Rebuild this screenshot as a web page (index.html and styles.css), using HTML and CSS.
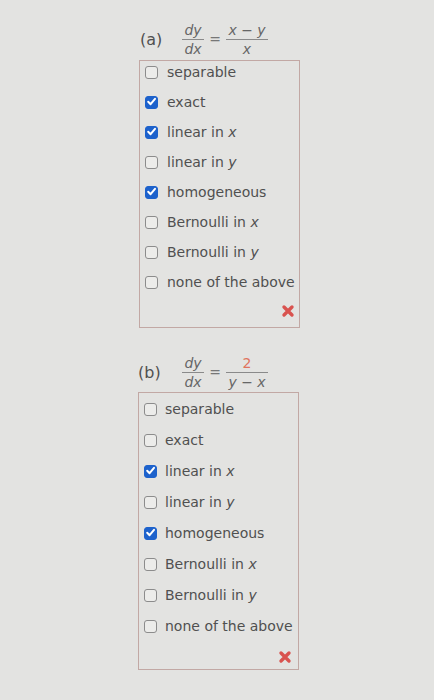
FILE: index.html
```html
<!DOCTYPE html>
<html>
<head>
<meta charset="utf-8">
<link rel="stylesheet" href="styles.css">
</head>
<body>
<div class="page">
  <section class="part part-a">
    <div class="eq">
      <span class="label">(a)</span>
      <span class="frac frac-d"><span class="num">dy</span><span class="den">dx</span></span>
      <span class="eqsign">=</span>
      <span class="frac frac-r"><span class="num">x − y</span><span class="den">x</span></span>
    </div>
    <div class="box">
      <div class="opt"><span class="cb"></span><span class="txt">separable</span></div>
      <div class="opt"><span class="cb on"><svg viewBox="0 0 13 13"><path d="M3.2 6.8 L5.6 9.2 L10 3.8"/></svg></span><span class="txt">exact</span></div>
      <div class="opt"><span class="cb on"><svg viewBox="0 0 13 13"><path d="M3.2 6.8 L5.6 9.2 L10 3.8"/></svg></span><span class="txt">linear in <i>x</i></span></div>
      <div class="opt"><span class="cb"></span><span class="txt">linear in <i>y</i></span></div>
      <div class="opt"><span class="cb on"><svg viewBox="0 0 13 13"><path d="M3.2 6.8 L5.6 9.2 L10 3.8"/></svg></span><span class="txt">homogeneous</span></div>
      <div class="opt"><span class="cb"></span><span class="txt">Bernoulli in <i>x</i></span></div>
      <div class="opt"><span class="cb"></span><span class="txt">Bernoulli in <i>y</i></span></div>
      <div class="opt"><span class="cb"></span><span class="txt">none of the above</span></div>
      <div class="mark"><svg viewBox="0 0 14 14"><path d="M3 3 L11 11 M11 3 L3 11"/></svg></div>
    </div>
  </section>

  <section class="part part-b">
    <div class="eq">
      <span class="label">(b)</span>
      <span class="frac frac-d"><span class="num">dy</span><span class="den">dx</span></span>
      <span class="eqsign">=</span>
      <span class="frac frac-r"><span class="num red">2</span><span class="den">y − x</span></span>
    </div>
    <div class="box">
      <div class="opt"><span class="cb"></span><span class="txt">separable</span></div>
      <div class="opt"><span class="cb"></span><span class="txt">exact</span></div>
      <div class="opt"><span class="cb on"><svg viewBox="0 0 13 13"><path d="M3.2 6.8 L5.6 9.2 L10 3.8"/></svg></span><span class="txt">linear in <i>x</i></span></div>
      <div class="opt"><span class="cb"></span><span class="txt">linear in <i>y</i></span></div>
      <div class="opt"><span class="cb on"><svg viewBox="0 0 13 13"><path d="M3.2 6.8 L5.6 9.2 L10 3.8"/></svg></span><span class="txt">homogeneous</span></div>
      <div class="opt"><span class="cb"></span><span class="txt">Bernoulli in <i>x</i></span></div>
      <div class="opt"><span class="cb"></span><span class="txt">Bernoulli in <i>y</i></span></div>
      <div class="opt"><span class="cb"></span><span class="txt">none of the above</span></div>
      <div class="mark"><svg viewBox="0 0 14 14"><path d="M3 3 L11 11 M11 3 L3 11"/></svg></div>
    </div>
  </section>
</div>
</body>
</html>
```
FILE: styles.css
```css
html, body {
  margin: 0;
  padding: 0;
  background: #e3e3e1;
}
body {
  font-family: "DejaVu Sans", Verdana, sans-serif;
  color: #505050;
  width: 434px;
  height: 700px;
  overflow: hidden;
}
.page {
  display: flex;
  flex-direction: column;
  padding-top: 18px;
}
.part {
  display: flex;
  flex-direction: column;
}
.part-a { margin-left: 139px; }
.part-b { margin-left: 138px; margin-top: 24px; }

.eq {
  display: flex;
  align-items: center;
  height: 42px;
}
.part-b .eq { height: 40px; }
.label {
  font-size: 16px;
  width: 43px;
  padding-left: 1px;
  box-sizing: border-box;
  color: #505050;
}
.part-b .label { width: 44px; padding-left: 0; }
.frac {
  display: inline-flex;
  flex-direction: column;
  align-items: stretch;
  font-size: 14px;
  font-style: italic;
  color: #666;
}
.frac .num, .frac .den {
  display: block;
  text-align: center;
  line-height: 18px;
  height: 18px;
  white-space: nowrap;
}
.frac .num { border-bottom: 1px solid #8a8a8a; }
.frac-d { width: 22px; }
.frac-r { width: 42px; }
.frac .red { color: #e0735e; font-style: normal; }
.eqsign {
  font-size: 14px;
  color: #777;
  width: 22px;
  text-align: center;
}

.box {
  border: 1px solid #c2a8a4;
  width: 161px;
  box-sizing: border-box;
  display: flex;
  flex-direction: column;
  padding: 1px 4px 9px 5px;
  gap: 10px;
}
.part-b .box {
  width: 161px;
  padding: 6px 6px 5px 5px;
  gap: 11px;
}
.opt {
  display: flex;
  align-items: center;
  height: 20px;
  gap: 9px;
  font-size: 14px;
  white-space: nowrap;
}
.part-b .opt { gap: 8px; }
.txt { color: #505050; }
.txt i { font-style: italic; }
.cb {
  width: 13px;
  height: 13px;
  box-sizing: border-box;
  border: 1.5px solid #8c8c8c;
  border-radius: 3px;
  background: #ececea;
  flex: none;
  display: flex;
}
.cb.on {
  background: #1d62cc;
  border-color: #1d62cc;
}
.cb svg {
  margin: -1.5px;
  width: 13px;
  height: 13px;
}
.cb svg path {
  fill: none;
  stroke: #ffffff;
  stroke-width: 2;
  stroke-linecap: round;
  stroke-linejoin: round;
}
.mark {
  display: flex;
  justify-content: flex-end;
  height: 14px;
  margin-top: 2px;
}
.part-b .mark { margin-top: 3px; }
.mark svg { width: 14px; height: 14px; }
.mark svg path {
  fill: none;
  stroke: #d9534f;
  stroke-width: 3.4;
  stroke-linecap: round;
}
```
